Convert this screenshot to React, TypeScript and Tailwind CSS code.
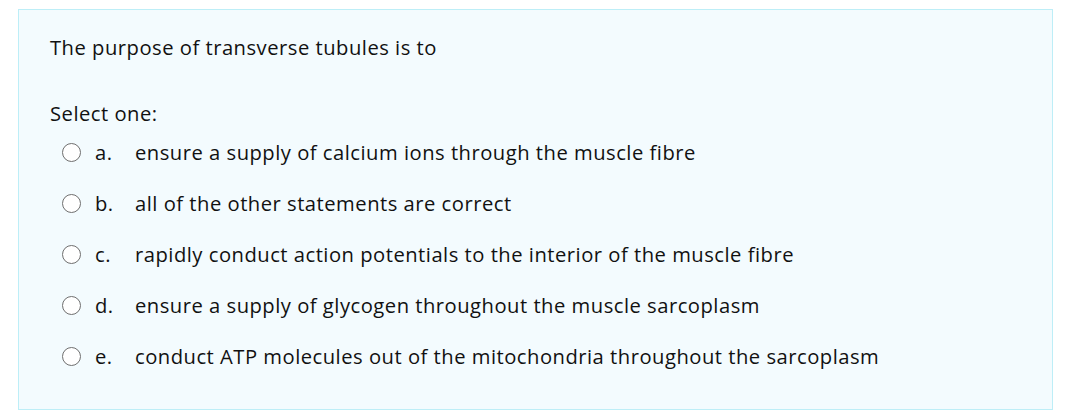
const options = [
  { letter: 'a.', text: 'ensure a supply of calcium ions through the muscle fibre' },
  { letter: 'b.', text: 'all of the other statements are correct' },
  { letter: 'c.', text: 'rapidly conduct action potentials to the interior of the muscle fibre' },
  { letter: 'd.', text: 'ensure a supply of glycogen throughout the muscle sarcoplasm' },
  { letter: 'e.', text: 'conduct ATP molecules out of the mitochondria throughout the sarcoplasm' },
];

export default function App() {
  return (
    <div
      className="w-[1069px] h-[418px] bg-white pt-[9px] pl-[18px] text-[#111] text-[20.2px] tracking-[0.5px]"
      style={{ fontFamily: '"Open Sans", "Noto Sans", sans-serif' }}
    >
      <div className="w-[1035px] h-[401px] border border-[#bdeef7] bg-[#f3fbfe] pl-[31px] pt-[21px]">
        <p className="leading-[32px]">The purpose of transverse tubules is to</p>
        <p className="mt-[34px] leading-[32px]">Select one:</p>
        <div className="flex flex-col gap-[19px] mt-[7px]">
          {options.map((o) => (
            <label key={o.letter} className="flex items-center h-[32px]">
              <span className="ml-[12px] w-[19px] h-[19px] rounded-full border-[1.5px] border-[#6f6f6f] bg-white" />
              <span className="ml-[14px] w-[40px]">{o.letter}</span>
              <span>{o.text}</span>
            </label>
          ))}
        </div>
      </div>
    </div>
  );
}
